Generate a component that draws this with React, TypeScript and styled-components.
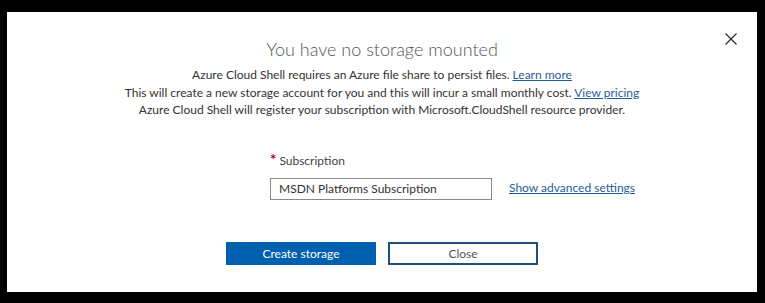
import React from 'react';
import styled, { createGlobalStyle } from 'styled-components';

const GlobalStyle = createGlobalStyle`
	html, body {
		margin: 0;
		padding: 0;
		background: #000;
	}
	body {
		font-family: Lato, "Open Sans", "Liberation Sans", sans-serif;
	}
`;

const Screen = styled.div`
	width: 765px;
	height: 303px;
	background: #000;
	padding: 12px 8px 11px 7px;
	box-sizing: border-box;
`;

const Dialog = styled.div`
	position: relative;
	width: 750px;
	height: 280px;
	background: #fff;
	display: flex;
	flex-direction: column;
	align-items: center;
	padding-top: 25px;
	box-sizing: border-box;
`;

const CloseIcon = styled.button`
	position: absolute;
	top: 19px;
	right: 18px;
	width: 16px;
	height: 16px;
	padding: 0;
	border: none;
	background: none;
	display: flex;
	align-items: center;
	justify-content: center;
	cursor: pointer;
`;

const Title = styled.h1`
	margin: 0;
	font-size: 18px;
	font-weight: 300;
	color: #555;
	line-height: 24px;
`;

const Intro = styled.div`
	margin-top: 5px;
	font-size: 12px;
	line-height: 17.5px;
	color: #333;
	text-align: center;
`;

const Link = styled.a`
	color: #1e5d9a;
	text-decoration: underline;
	cursor: pointer;
`;

const Form = styled.div`
	width: 224px;
	margin-top: 32px;
	display: flex;
	flex-direction: column;
`;

const Label = styled.label`
	font-size: 12px;
	line-height: 16px;
	color: #444;
	white-space: nowrap;
`;

const Required = styled.span`
	color: #c2002f;
	font-size: 15px;
	font-weight: 700;
	margin-right: 3px;
`;

const FieldRow = styled.div`
	display: flex;
	align-items: center;
	margin-top: 9px;
`;

const Select = styled.div`
	flex: 0 0 auto;
	width: 222px;
	height: 22px;
	box-sizing: border-box;
	border: 1px solid #8a8a8a;
	padding: 0 8px;
	font-size: 12px;
	line-height: 20px;
	color: #333;
	white-space: nowrap;
`;

const AdvancedLink = styled(Link)`
	flex: 0 0 auto;
	margin-left: 17px;
	font-size: 12px;
	white-space: nowrap;
	margin-top: -3px;
`;

const Actions = styled.div`
	display: flex;
	gap: 12px;
	margin-top: 42px;
`;

const Button = styled.button<{ primary?: boolean }>`
	width: 150px;
	height: 23px;
	box-sizing: border-box;
	font-family: inherit;
	font-size: 12px;
	padding: 0;
	cursor: pointer;
	border: ${(p) => (p.primary ? 'none' : '2px solid #1f4f7d')};
	background: ${(p) => (p.primary ? '#0060b0' : '#fff')};
	color: ${(p) => (p.primary ? '#fff' : '#555')};
`;

export default function App() {
	return (
		<>
			<GlobalStyle />
			<Screen>
				<Dialog>
					<CloseIcon aria-label="Close">
						<svg width="12" height="12" viewBox="0 0 12 12">
							<path d="M0.5 0.5 L11.5 11.5 M11.5 0.5 L0.5 11.5" stroke="#222" strokeWidth="1.1" />
						</svg>
					</CloseIcon>
					<Title>You have no storage mounted</Title>
					<Intro>
						Azure Cloud Shell requires an Azure file share to persist files. <Link>Learn more</Link>
						<br />
						This will create a new storage account for you and this will incur a small monthly cost.{' '}
						<Link>View pricing</Link>
						<br />
						Azure Cloud Shell will register your subscription with Microsoft.CloudShell resource provider.
					</Intro>
					<Form>
						<Label>
							<Required>*</Required>Subscription
						</Label>
						<FieldRow>
							<Select>MSDN Platforms Subscription</Select>
							<AdvancedLink>Show advanced settings</AdvancedLink>
						</FieldRow>
					</Form>
					<Actions>
						<Button primary>Create storage</Button>
						<Button>Close</Button>
					</Actions>
				</Dialog>
			</Screen>
		</>
	);
}
